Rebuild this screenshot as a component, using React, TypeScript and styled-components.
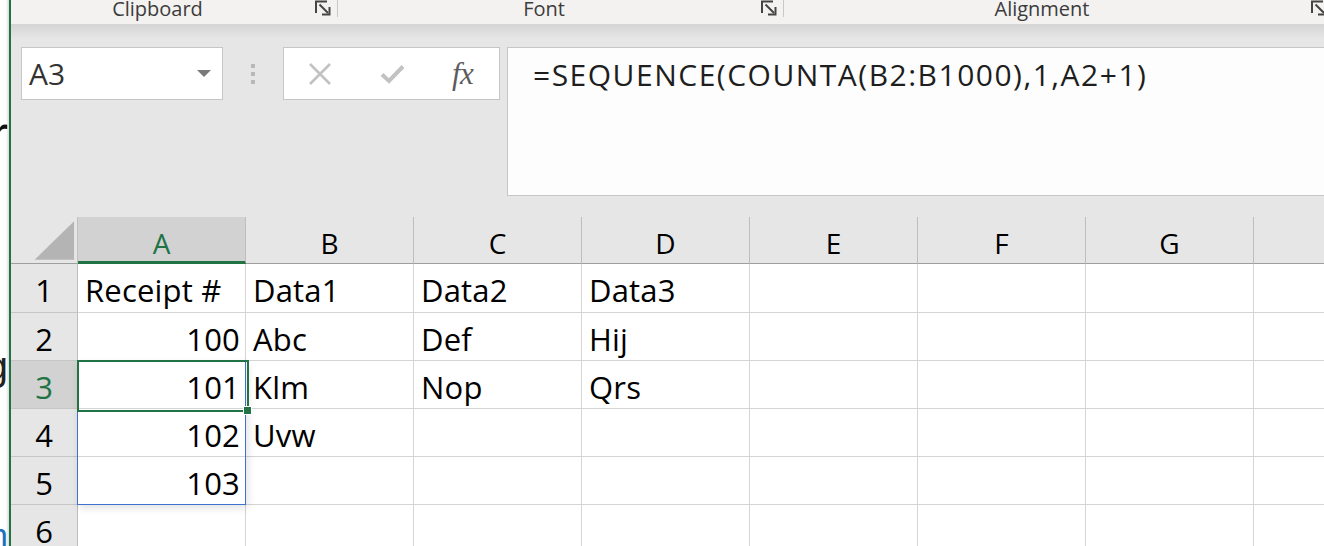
import styled, { createGlobalStyle } from "styled-components";

const GlobalStyle = createGlobalStyle`
  html, body {
    margin: 0;
    padding: 0;
    background: #ffffff;
  }
  body {
    width: 1324px;
    height: 546px;
    overflow: hidden;
    font-family: "Open Sans", "Noto Sans", sans-serif;
  }
`;

const GREEN = "#217346";

type Value = string | number | undefined;

const rows: Value[][] = [
  ["Receipt #", "Data1", "Data2", "Data3"],
  [100, "Abc", "Def", "Hij"],
  [101, "Klm", "Nop", "Qrs"],
  [102, "Uvw"],
  [103],
  [],
];

const columns = ["A", "B", "C", "D", "E", "F", "G", "H"];

const groups = [
  { label: "Clipboard", width: 327 },
  { label: "Font", width: 446 },
  { label: "Alignment", width: 550 },
];

// small "dialog launcher" arrow of a ribbon group
const LauncherIcon = () => (
  <svg width="16" height="16" viewBox="0 0 16 16">
    <path d="M1 13V1.5H12" fill="none" stroke="#444" strokeWidth="2" />
    <path d="M4.5 4.5L13 13" stroke="#444" strokeWidth="2" />
    <path d="M7 14.5H14.5V7" fill="none" stroke="#444" strokeWidth="2" />
  </svg>
);

const App = () => {
  return (
    <>
      <GlobalStyle />
      <Window>
        <LeftStrip>
          <Fragment top={108} size={52} color="#111">
            r
          </Fragment>
          <Fragment top={346} size={40} color="#222">
            g
          </Fragment>
          <Fragment top={518} size={34} color="#1f6fc0">
            n
          </Fragment>
        </LeftStrip>
        <GreenEdge />
        <Main>
          <Ribbon>
            {groups.map((g) => (
              <RibbonGroup key={g.label} width={g.width}>
                <GroupLabel>{g.label}</GroupLabel>
                <Launcher>
                  <LauncherIcon />
                </Launcher>
                <GroupDivider />
              </RibbonGroup>
            ))}
          </Ribbon>

          <FormulaArea>
            <NameBox>
              <NameText>A3</NameText>
              <svg width="14" height="7" viewBox="0 0 14 7">
                <path d="M0 0H14L7 7Z" fill="#7a7a7a" />
              </svg>
            </NameBox>
            <Grip>
              <GripDot />
              <GripDot />
              <GripDot />
            </Grip>
            <FnBox>
              <svg width="24" height="22" viewBox="0 0 24 22">
                <path
                  d="M2 1L22 21M22 1L2 21"
                  stroke="#c2c2c2"
                  strokeWidth="2.6"
                />
              </svg>
              <CheckSlot>
                <svg width="25" height="20" viewBox="0 0 25 20">
                  <path
                    d="M2 10.5L9 17L23 2.5"
                    fill="none"
                    stroke="#c2c2c2"
                    strokeWidth="4"
                  />
                </svg>
              </CheckSlot>
              <FxLabel>fx</FxLabel>
            </FnBox>
            <FormulaInput>=SEQUENCE(COUNTA(B2:B1000),1,A2+1)</FormulaInput>
          </FormulaArea>

          <Sheet>
            <Corner>
              <svg width="67" height="47" viewBox="0 0 67 47">
                <path d="M24 43L64 4V43Z" fill="#b4b4b4" />
              </svg>
            </Corner>
            {columns.map((c) => (
              <ColHeader key={c} selected={c === "A"}>
                {c}
              </ColHeader>
            ))}
            {rows.map((row, r) => (
              <Row key={r} row={row} index={r + 1} />
            ))}
          </Sheet>
        </Main>
      </Window>
    </>
  );
};

const Row = ({ row, index }: { row: Value[]; index: number }) => (
  <>
    <RowHeader selected={index === 3}>{index}</RowHeader>
    {columns.map((c, i) => {
      const v = row[i];
      const isNum = typeof v === "number";
      const active = c === "A" && index === 3;
      return (
        <Cell key={c} numeric={isNum} active={active}>
          {v}
          {active && (
            <>
              <SpillRange />
              <Selection>
                <FillHandle />
              </Selection>
            </>
          )}
        </Cell>
      );
    })}
  </>
);

const Window = styled.div`
  width: 1324px;
  height: 546px;
  display: flex;
  overflow: hidden;
`;

const LeftStrip = styled.div`
  width: 9px;
  flex-shrink: 0;
  position: relative;
  overflow: hidden;
  background: linear-gradient(90deg, #ffffff 0, #ffffff 6px, #d9d9d9 9px);
`;

const Fragment = styled.span<{ top: number; size: number; color: string }>`
  position: absolute;
  right: 1px;
  top: ${(p) => p.top}px;
  font-family: "Liberation Sans", sans-serif;
  font-size: ${(p) => p.size}px;
  line-height: 1;
  color: ${(p) => p.color};
`;

const GreenEdge = styled.div`
  width: 2px;
  flex-shrink: 0;
  background: ${GREEN};
`;

const Main = styled.div`
  flex: 1;
  min-width: 0;
  display: flex;
  flex-direction: column;
  overflow: hidden;
  background: #e6e6e6;
`;

const Ribbon = styled.div`
  height: 24px;
  flex-shrink: 0;
  display: flex;
  align-items: flex-start;
  background: #f3f2f1;
  overflow: hidden;
`;

const RibbonGroup = styled.div<{ width: number }>`
  width: ${(p) => p.width}px;
  flex-shrink: 0;
  display: flex;
  align-items: flex-start;
`;

const GroupLabel = styled.span`
  flex: 1;
  padding-right: 4px;
  text-align: center;
  font-size: 20px;
  line-height: 17px;
  color: #3c3c3c;
`;

const Launcher = styled.span`
  width: 16px;
  height: 16px;
  margin: 0 6px 0 7px;
  display: flex;
`;

const GroupDivider = styled.span`
  width: 1px;
  height: 17px;
  background: #c8c8c8;
`;

const FormulaArea = styled.div`
  height: 193px;
  flex-shrink: 0;
  box-sizing: border-box;
  padding: 23px 0 0 10px;
  display: flex;
  align-items: flex-start;
  background: linear-gradient(#d5d5d5 0, #e6e6e6 15px);
`;

const NameBox = styled.div`
  width: 202px;
  height: 53px;
  flex-shrink: 0;
  box-sizing: border-box;
  border: 1px solid #c6c6c6;
  background: #ffffff;
  padding: 0 11px 0 7px;
  display: flex;
  align-items: center;
  justify-content: space-between;
`;

const NameText = styled.span`
  font-size: 30px;
  line-height: 51px;
  color: #333;
`;

const Grip = styled.div`
  width: 60px;
  flex-shrink: 0;
  padding-top: 17px;
  display: flex;
  flex-direction: column;
  align-items: center;
  gap: 4px;
`;

const GripDot = styled.span`
  width: 4px;
  height: 4px;
  background: #b8b8b8;
`;

const FnBox = styled.div`
  width: 217px;
  height: 53px;
  flex-shrink: 0;
  box-sizing: border-box;
  border: 1px solid #c6c6c6;
  background: #ffffff;
  padding-left: 24px;
  display: flex;
  align-items: center;
`;

const CheckSlot = styled.span`
  margin-left: 48px;
  display: flex;
`;

const FxLabel = styled.span`
  margin-left: 47px;
  font-family: "Liberation Serif", "DejaVu Serif", serif;
  font-style: italic;
  font-size: 31px;
  color: #5c5c5c;
  letter-spacing: -0.5px;
`;

const FormulaInput = styled.div`
  flex: 1;
  height: 149px;
  margin-left: 7px;
  box-sizing: border-box;
  border: 1px solid #c6c6c6;
  border-right: none;
  background: #fdfdfd;
  padding: 7px 0 0 25px;
  font-size: 30px;
  line-height: 40px;
  letter-spacing: 1.5px;
  color: #1e1e1e;
  white-space: nowrap;
`;

const Sheet = styled.div`
  display: grid;
  grid-template-columns: 67px repeat(8, 168px);
  grid-template-rows: 47px 49px repeat(5, 48px);
  background: #ffffff;
`;

const Corner = styled.div`
  background: #e6e6e6;
  box-sizing: border-box;
  border-bottom: 1px solid #9f9f9f;
  border-right: 1px solid #c0c0c0;
  display: flex;
`;

const ColHeader = styled.div<{ selected?: boolean }>`
  box-sizing: border-box;
  background: ${(p) => (p.selected ? "#d2d2d2" : "#e6e6e6")};
  border-right: 1px solid #bdbdbd;
  border-bottom: ${(p) => (p.selected ? `3px solid ${GREEN}` : "1px solid #9f9f9f")};
  padding-top: 6px;
  text-align: center;
  font-size: 28px;
  line-height: 41px;
  color: ${(p) => (p.selected ? GREEN : "#000")};
`;

const RowHeader = styled.div<{ selected?: boolean }>`
  box-sizing: border-box;
  background: ${(p) => (p.selected ? "#d2d2d2" : "#e6e6e6")};
  border-right: 1px solid #bdbdbd;
  border-bottom: 1px solid #c6c6c6;
  padding-top: 4px;
  text-align: center;
  font-size: 31px;
  line-height: 44px;
  color: ${(p) => (p.selected ? GREEN : "#000")};
`;

const Cell = styled.div<{ numeric?: boolean; active?: boolean }>`
  box-sizing: border-box;
  position: ${(p) => (p.active ? "relative" : "static")};
  z-index: ${(p) => (p.active ? 2 : "auto")};
  border-right: 1px solid #d4d4d4;
  border-bottom: 1px solid #d4d4d4;
  padding: 4px ${(p) => (p.numeric ? "5px" : "0")} 0 ${(p) => (p.numeric ? "0" : "7px")};
  text-align: ${(p) => (p.numeric ? "right" : "left")};
  font-size: 31px;
  line-height: 44px;
  letter-spacing: 0.2px;
  color: #000;
  white-space: nowrap;
`;

const SpillRange = styled.div`
  position: absolute;
  top: 0;
  left: -1px;
  width: 169px;
  height: 144px;
  box-sizing: border-box;
  border: 1px solid #3f72cf;
  box-shadow: 2px 3px 8px rgba(0, 0, 0, 0.12);
  pointer-events: none;
`;

const Selection = styled.div`
  position: absolute;
  top: -1px;
  left: -1px;
  width: 172px;
  height: 52px;
  box-sizing: border-box;
  border: 2.5px solid ${GREEN};
  pointer-events: none;
`;

const FillHandle = styled.div`
  position: absolute;
  right: -5px;
  bottom: -5px;
  width: 7px;
  height: 7px;
  background: ${GREEN};
  border: 1px solid #ffffff;
`;

export default App;
